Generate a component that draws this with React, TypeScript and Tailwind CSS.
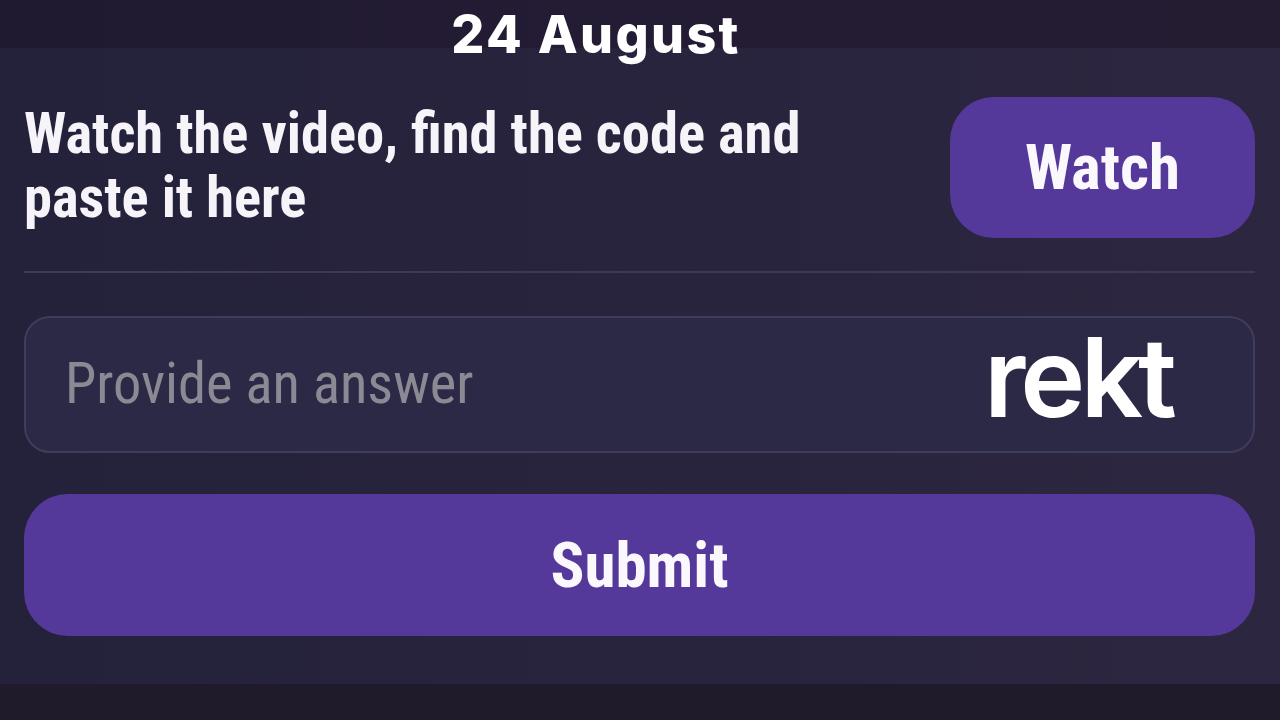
export default function App() {
  const cond = { fontFamily: "'Roboto Condensed', Roboto, 'Liberation Sans', sans-serif" };
  return (
    <div className="flex h-[720px] w-[1280px] flex-col overflow-hidden bg-[#1f1b2a]">
      {/* date strip */}
      <div className="relative z-10 flex h-[48px] shrink-0 justify-center bg-gradient-to-r from-[#201a31] via-[#231c34] to-[#241c31] pr-[88px] pt-[9px]">
        <span
          className="text-[52px] font-extrabold leading-none tracking-[0.045em] whitespace-nowrap text-white"
          style={{ fontFamily: "Inter, 'Open Sans', sans-serif" }}
        >
          24 August
        </span>
      </div>

      {/* task card */}
      <div className="flex h-[636px] shrink-0 flex-col bg-gradient-to-r from-[#24213a] via-[#28243d] to-[#2d2640] pb-[48px] pl-[24px] pr-[25px] pt-[49px]">
        <div className="flex items-start justify-between">
          <p
            className="mt-[5px] text-[56.5px] font-bold leading-[64px] whitespace-nowrap text-[#f6f4f9]"
            style={cond}
          >
            Watch the video, find the code and
            <br />
            paste it here
          </p>
          <button
            className="flex h-[141px] w-[305px] items-center justify-center rounded-[44px] bg-[#55399a] text-[63px] font-bold leading-none text-[#faf8fc]"
            style={cond}
          >
            Watch
          </button>
        </div>

        <div className="mt-[33px] h-[2px] w-full bg-[#3d3956]" />

        <div className="mt-[43px] flex h-[137px] items-center justify-between rounded-[26px] border-2 border-[#403d5c] bg-[#2c2946] pl-[39px] pr-[81px]">
          <input
            className="w-[600px] bg-transparent text-[56.5px] text-white outline-none placeholder:text-[#8b8a94]"
            style={cond}
            placeholder="Provide an answer"
          />
          <span
            className="mb-[15px] text-[110px] font-semibold leading-none tracking-[-0.045em] text-white"
            style={{ fontFamily: "Inter, sans-serif" }}
          >
            rekt
          </span>
        </div>

        <button
          className="mt-[41px] flex h-[142px] w-full items-center justify-center rounded-[44px] bg-[#55399a] text-[63px] font-bold leading-none text-[#faf8fc]"
          style={cond}
        >
          Submit
        </button>
      </div>
    </div>
  );
}
